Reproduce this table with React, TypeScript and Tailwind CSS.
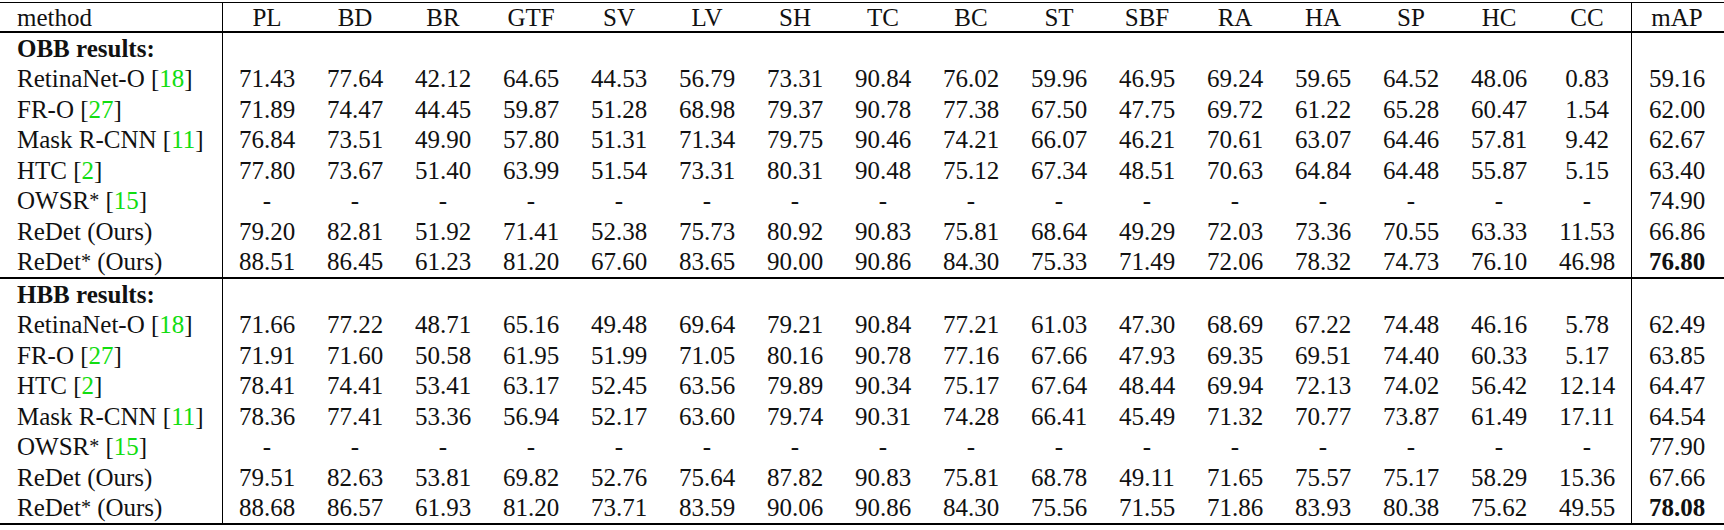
const cols = ["PL", "BD", "BR", "GTF", "SV", "LV", "SH", "TC", "BC", "ST", "SBF", "RA", "HA", "SP", "HC", "CC"];

type Row = { name: string; star?: boolean; cite?: string; ours?: boolean; vals: string[]; map: string; bold?: boolean };

const dash = Array(16).fill("-");

const obb: Row[] = [
  { name: "RetinaNet-O", cite: "18", vals: "71.43 77.64 42.12 64.65 44.53 56.79 73.31 90.84 76.02 59.96 46.95 69.24 59.65 64.52 48.06 0.83".split(" "), map: "59.16" },
  { name: "FR-O", cite: "27", vals: "71.89 74.47 44.45 59.87 51.28 68.98 79.37 90.78 77.38 67.50 47.75 69.72 61.22 65.28 60.47 1.54".split(" "), map: "62.00" },
  { name: "Mask R-CNN", cite: "11", vals: "76.84 73.51 49.90 57.80 51.31 71.34 79.75 90.46 74.21 66.07 46.21 70.61 63.07 64.46 57.81 9.42".split(" "), map: "62.67" },
  { name: "HTC", cite: "2", vals: "77.80 73.67 51.40 63.99 51.54 73.31 80.31 90.48 75.12 67.34 48.51 70.63 64.84 64.48 55.87 5.15".split(" "), map: "63.40" },
  { name: "OWSR", star: true, cite: "15", vals: dash, map: "74.90" },
  { name: "ReDet", ours: true, vals: "79.20 82.81 51.92 71.41 52.38 75.73 80.92 90.83 75.81 68.64 49.29 72.03 73.36 70.55 63.33 11.53".split(" "), map: "66.86" },
  { name: "ReDet", star: true, ours: true, vals: "88.51 86.45 61.23 81.20 67.60 83.65 90.00 90.86 84.30 75.33 71.49 72.06 78.32 74.73 76.10 46.98".split(" "), map: "76.80", bold: true },
];

const hbb: Row[] = [
  { name: "RetinaNet-O", cite: "18", vals: "71.66 77.22 48.71 65.16 49.48 69.64 79.21 90.84 77.21 61.03 47.30 68.69 67.22 74.48 46.16 5.78".split(" "), map: "62.49" },
  { name: "FR-O", cite: "27", vals: "71.91 71.60 50.58 61.95 51.99 71.05 80.16 90.78 77.16 67.66 47.93 69.35 69.51 74.40 60.33 5.17".split(" "), map: "63.85" },
  { name: "HTC", cite: "2", vals: "78.41 74.41 53.41 63.17 52.45 63.56 79.89 90.34 75.17 67.64 48.44 69.94 72.13 74.02 56.42 12.14".split(" "), map: "64.47" },
  { name: "Mask R-CNN", cite: "11", vals: "78.36 77.41 53.36 56.94 52.17 63.60 79.74 90.31 74.28 66.41 45.49 71.32 70.77 73.87 61.49 17.11".split(" "), map: "64.54" },
  { name: "OWSR", star: true, cite: "15", vals: dash, map: "77.90" },
  { name: "ReDet", ours: true, vals: "79.51 82.63 53.81 69.82 52.76 75.64 87.82 90.83 75.81 68.78 49.11 71.65 75.57 75.17 58.29 15.36".split(" "), map: "67.66" },
  { name: "ReDet", star: true, ours: true, vals: "88.68 86.57 61.93 81.20 73.71 83.59 90.06 90.86 84.30 75.56 71.55 71.86 83.93 80.38 75.62 49.55".split(" "), map: "78.08", bold: true },
];

const grid = "grid grid-cols-[223px_repeat(16,88px)_1fr] items-stretch";

function Label({ r }: { r: Row }) {
  return (
    <span className="whitespace-nowrap">
      {r.name}
      {r.star && <sup className="text-[20px] relative -top-[2px]">*</sup>}
      {r.cite && (
        <>
          {" "}[<span className="text-[#11dd11]">{r.cite}</span>]
        </>
      )}
      {r.ours && " (Ours)"}
    </span>
  );
}

function DataRow({ r }: { r: Row }) {
  return (
    <div className={`${grid} h-[30.5px]`}>
      <div className="border-r-[1.5px] border-black pl-[17px] flex items-center">
        <Label r={r} />
      </div>
      {r.vals.map((v, i) => (
        <div key={i} className="flex items-center justify-center">
          {v}
        </div>
      ))}
      <div className={`border-l-[1.5px] border-black flex items-center justify-center pr-[2px] ${r.bold ? "font-bold" : ""}`}>
        {r.map}
      </div>
    </div>
  );
}

function TitleRow({ title }: { title: string }) {
  return (
    <div className={`${grid} h-[30.5px]`}>
      <div className="border-r-[1.5px] border-black pl-[17px] flex items-center font-bold whitespace-nowrap">{title}</div>
      <div className="col-span-16" />
      <div className="border-l-[1.5px] border-black" />
    </div>
  );
}

export default function App() {
  return (
    <div className="w-[1724px] h-[530px] bg-white text-[#111] pt-[2px] font-['Liberation_Serif','Times_New_Roman',serif] text-[25px] leading-none">
      <div className="border-t-[1.5px] border-b-[2px] border-black">
        <div className={`${grid} h-[30px] border-b-[2px] border-black`}>
          <div className="border-r-[1.5px] border-black pl-[17px] flex items-center">method</div>
          {cols.map((c) => (
            <div key={c} className="flex items-center justify-center">
              {c}
            </div>
          ))}
          <div className="border-l-[1.5px] border-black flex items-center justify-center pr-[2px]">mAP</div>
        </div>
        <TitleRow title="OBB results:" />
        {obb.map((r, i) => (
          <DataRow key={i} r={r} />
        ))}
        <div className="border-t-[2px] border-black">
          <TitleRow title="HBB results:" />
          {hbb.map((r, i) => (
            <DataRow key={i} r={r} />
          ))}
        </div>
      </div>
    </div>
  );
}
